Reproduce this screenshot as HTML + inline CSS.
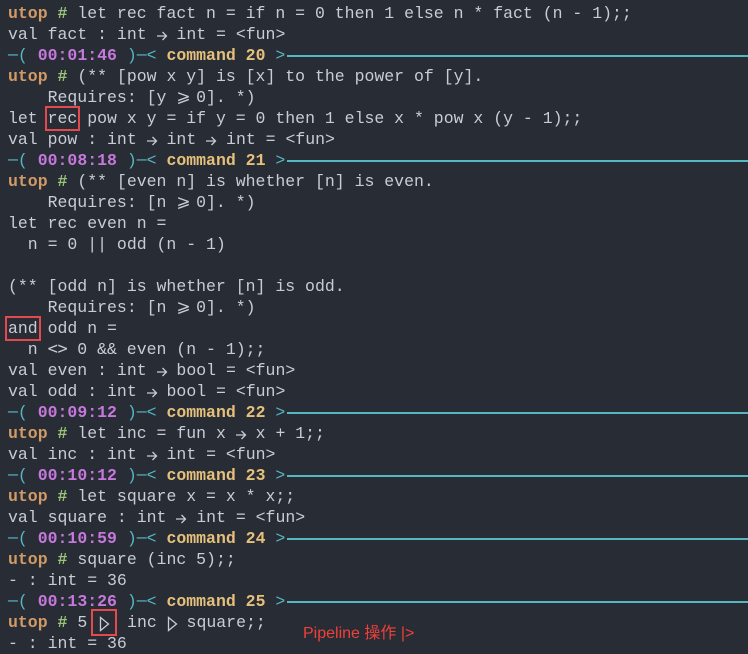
<!DOCTYPE html>
<html><head><meta charset="utf-8"><style>
html,body{margin:0;padding:0;background:#282c34;width:748px;height:654px;overflow:hidden}
#t{position:absolute;left:8px;top:3px;font-family:"Liberation Mono","DejaVu Sans Mono",monospace;font-size:16.5px;line-height:21px;color:#c8ccd4}
.l{height:21px;white-space:pre}
.u{color:#d19a66;font-weight:bold}.h{color:#98c379;font-weight:bold}
.c{color:#56b6c2}.p{color:#c678dd;font-weight:bold}.y{color:#e5c07b;font-weight:bold}
.g{display:inline-block;width:9.9px;text-align:center;font-family:"DejaVu Sans Mono",monospace;font-size:17px}
svg.a{display:inline-block;width:10px;height:21px;vertical-align:top;overflow:visible}
.s{display:flex;align-items:center;width:740px}
.s .r{flex:1;height:2px;background:#56b6c2;margin-left:2px}
.b{outline:2px solid #e5484d;outline-offset:1px}
.bb{display:inline-block;outline:2px solid #e5484d;outline-offset:1px;width:20px;height:21px;vertical-align:top;text-align:center;margin:0 3px 0 -3px}
.ann{position:absolute;left:303px;top:619px;font-family:"Liberation Sans","Noto Sans CJK SC",sans-serif;font-size:16px;color:#f0403a}
</style></head><body>
<div id="t"><div class="l"><span class="u">utop</span> <span class="h">#</span> let rec fact n = if n = 0 then 1 else n * fact (n - 1);;</div><div class="l">val fact : int <svg class="a" viewBox="0 0 10 21"><path d="M0 12H9.5M5.5 8L9.5 12L5.5 16" fill="none" stroke="#c8ccd4" stroke-width="1.3"/></svg> int = &lt;fun&gt;</div><div class="l s"><span class="c">─( </span><span class="p">00:01:46</span><span class="c"> )─&lt; </span><span class="y">command 20</span><span class="c"> &gt;</span><span class="r"></span></div><div class="l"><span class="u">utop</span> <span class="h">#</span> (** [pow x y] is [x] to the power of [y].</div><div class="l">    Requires: [y <span class="g">⩾</span> 0]. *)</div><div class="l">let <span class="b">rec</span> pow x y = if y = 0 then 1 else x * pow x (y - 1);;</div><div class="l">val pow : int <svg class="a" viewBox="0 0 10 21"><path d="M0 12H9.5M5.5 8L9.5 12L5.5 16" fill="none" stroke="#c8ccd4" stroke-width="1.3"/></svg> int <svg class="a" viewBox="0 0 10 21"><path d="M0 12H9.5M5.5 8L9.5 12L5.5 16" fill="none" stroke="#c8ccd4" stroke-width="1.3"/></svg> int = &lt;fun&gt;</div><div class="l s"><span class="c">─( </span><span class="p">00:08:18</span><span class="c"> )─&lt; </span><span class="y">command 21</span><span class="c"> &gt;</span><span class="r"></span></div><div class="l"><span class="u">utop</span> <span class="h">#</span> (** [even n] is whether [n] is even.</div><div class="l">    Requires: [n <span class="g">⩾</span> 0]. *)</div><div class="l">let rec even n =</div><div class="l">  n = 0 || odd (n - 1)</div><div class="l"> </div><div class="l">(** [odd n] is whether [n] is odd.</div><div class="l">    Requires: [n <span class="g">⩾</span> 0]. *)</div><div class="l"><span class="b">and</span> odd n =</div><div class="l">  n <span class="g">&lt;</span><span class="g">&gt;</span> 0 &amp;&amp; even (n - 1);;</div><div class="l">val even : int <svg class="a" viewBox="0 0 10 21"><path d="M0 12H9.5M5.5 8L9.5 12L5.5 16" fill="none" stroke="#c8ccd4" stroke-width="1.3"/></svg> bool = &lt;fun&gt;</div><div class="l">val odd : int <svg class="a" viewBox="0 0 10 21"><path d="M0 12H9.5M5.5 8L9.5 12L5.5 16" fill="none" stroke="#c8ccd4" stroke-width="1.3"/></svg> bool = &lt;fun&gt;</div><div class="l s"><span class="c">─( </span><span class="p">00:09:12</span><span class="c"> )─&lt; </span><span class="y">command 22</span><span class="c"> &gt;</span><span class="r"></span></div><div class="l"><span class="u">utop</span> <span class="h">#</span> let inc = fun x <svg class="a" viewBox="0 0 10 21"><path d="M0 12H9.5M5.5 8L9.5 12L5.5 16" fill="none" stroke="#c8ccd4" stroke-width="1.3"/></svg> x + 1;;</div><div class="l">val inc : int <svg class="a" viewBox="0 0 10 21"><path d="M0 12H9.5M5.5 8L9.5 12L5.5 16" fill="none" stroke="#c8ccd4" stroke-width="1.3"/></svg> int = &lt;fun&gt;</div><div class="l s"><span class="c">─( </span><span class="p">00:10:12</span><span class="c"> )─&lt; </span><span class="y">command 23</span><span class="c"> &gt;</span><span class="r"></span></div><div class="l"><span class="u">utop</span> <span class="h">#</span> let square x = x * x;;</div><div class="l">val square : int <svg class="a" viewBox="0 0 10 21"><path d="M0 12H9.5M5.5 8L9.5 12L5.5 16" fill="none" stroke="#c8ccd4" stroke-width="1.3"/></svg> int = &lt;fun&gt;</div><div class="l s"><span class="c">─( </span><span class="p">00:10:59</span><span class="c"> )─&lt; </span><span class="y">command 24</span><span class="c"> &gt;</span><span class="r"></span></div><div class="l"><span class="u">utop</span> <span class="h">#</span> square (inc 5);;</div><div class="l">- : int = 36</div><div class="l s"><span class="c">─( </span><span class="p">00:13:26</span><span class="c"> )─&lt; </span><span class="y">command 25</span><span class="c"> &gt;</span><span class="r"></span></div><div class="l"><span class="u">utop</span> <span class="h">#</span> 5 <span class="bb"><svg class="a" viewBox="0 0 10 21"><path d="M1.5 5.5L9.5 12L1.5 18.5Z" fill="none" stroke="#c8ccd4" stroke-width="1.3"/></svg></span> inc <svg class="a" viewBox="0 0 10 21"><path d="M1.5 5.5L9.5 12L1.5 18.5Z" fill="none" stroke="#c8ccd4" stroke-width="1.3"/></svg> square;;</div><div class="l">- : int = 36</div></div>
<div class="ann">Pipeline 操作 |&gt;</div>
</body></html>
